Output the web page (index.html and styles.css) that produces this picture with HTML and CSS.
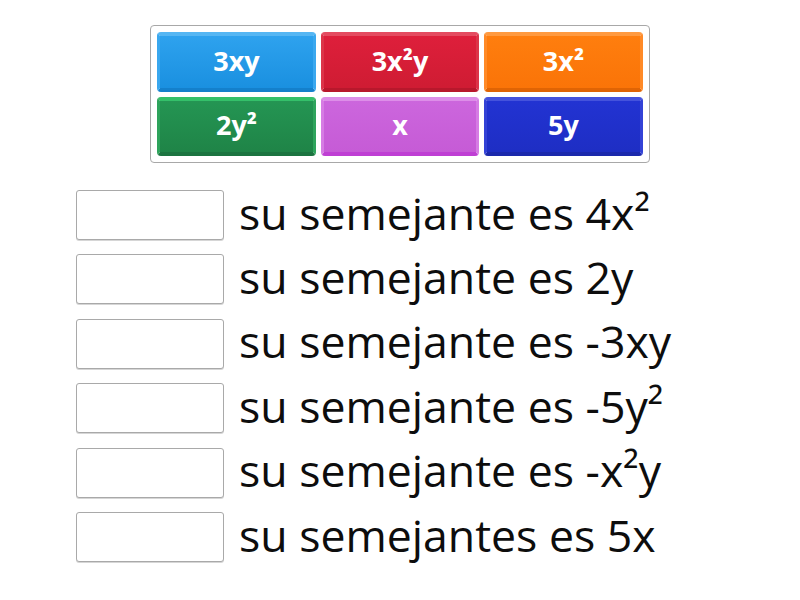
FILE: index.html
```html
<!DOCTYPE html>
<html lang="es">
<head>
<meta charset="utf-8">
<title>Términos semejantes</title>
<link rel="stylesheet" href="styles.css">
</head>
<body>
<div class="page">
  <div class="bank">
    <div class="tile blue">3xy</div>
    <div class="tile red">3x²y</div>
    <div class="tile orange">3x²</div>
    <div class="tile green">2y²</div>
    <div class="tile purple">x</div>
    <div class="tile navy">5y</div>
  </div>
  <div class="list">
    <div class="row"><div class="slot"></div><div class="label">su semejante es 4x²</div></div>
    <div class="row"><div class="slot"></div><div class="label">su semejante es 2y</div></div>
    <div class="row"><div class="slot"></div><div class="label">su semejante es -3xy</div></div>
    <div class="row"><div class="slot"></div><div class="label">su semejante es -5y²</div></div>
    <div class="row"><div class="slot"></div><div class="label">su semejante es -x²y</div></div>
    <div class="row"><div class="slot"></div><div class="label">su semejantes es 5x</div></div>
  </div>
</div>
</body>
</html>
```
FILE: styles.css
```css
html, body {
  margin: 0;
  padding: 0;
  background: #ffffff;
}
body {
  font-family: "Open Sans", "Noto Sans", sans-serif;
  width: 800px;
  height: 600px;
  overflow: hidden;
}
.page {
  display: flex;
  flex-direction: column;
  padding-top: 25px;
}
.bank {
  margin-left: 150px;
  width: 486px;
  padding: 6px;
  border: 1px solid #a8a8a8;
  border-radius: 4px;
  display: grid;
  grid-template-columns: 159px 158px 159px;
  grid-template-rows: 60px 59px;
  gap: 5px;
}
.tile {
  box-sizing: border-box;
  display: flex;
  align-items: center;
  justify-content: center;
  border-radius: 4px;
  border-style: solid;
  border-width: 4px 3px 4px 3px;
  color: #ffffff;
  font-weight: 700;
  font-size: 27px;
  line-height: 1;
  padding-bottom: 4px;
}
.blue {
  background: linear-gradient(#2ea2ee, #1a90e0);
  border-color: #55b6f3 #3aa8ef #1480cc #3aa8ef;
}
.red {
  background: linear-gradient(#de1f3b, #cf1c33);
  border-color: #e44b60 #dc3449 #b8182c #dc3449;
}
.orange {
  background: linear-gradient(#ff7e0e, #fa7408);
  border-color: #ff9a40 #ff8a27 #e06404 #ff8a27;
}
.green {
  background: linear-gradient(#249553, #1f8447);
  border-color: #34c06a #2ea45c #1c7440 #2ea45c;
}
.purple {
  background: linear-gradient(#cc66dd, #c65bd6);
  border-color: #dd8ee8 #d67ce4 #bf3fd4 #d67ce4;
}
.navy {
  background: linear-gradient(#2233d2, #1e2ec4);
  border-color: #4452dc #3342d6 #1b29ac #3342d6;
}
.list {
  display: flex;
  flex-direction: column;
  gap: 14.4px;
  margin-top: 27px;
  margin-left: 76px;
}
.row {
  display: flex;
  align-items: center;
  height: 50px;
}
.slot {
  box-sizing: border-box;
  width: 148px;
  height: 50px;
  border: 1px solid #a9a9a9;
  border-radius: 3px;
  background: #ffffff;
  box-shadow: 0 1px 0 #d6d6d6;
  flex: none;
}
.label {
  margin-left: 15px;
  font-size: 44.6px;
  line-height: 1;
  color: #0d0d0d;
  white-space: nowrap;
  padding-bottom: 4px;
}
```
